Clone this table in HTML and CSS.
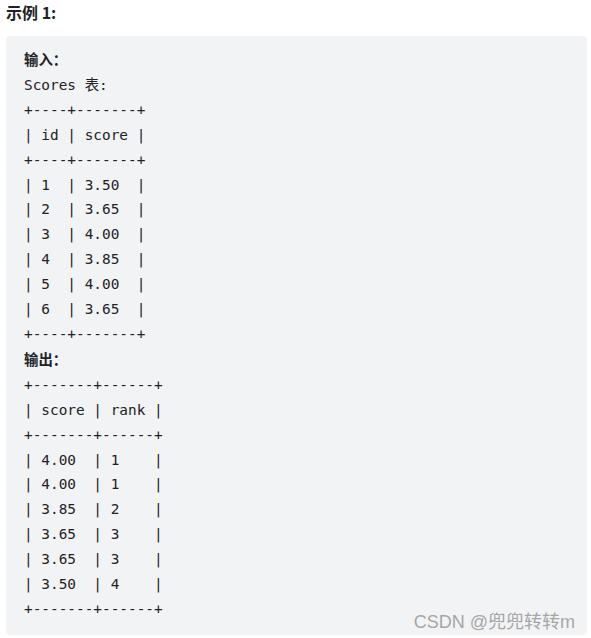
FILE: index.html
```html
<!DOCTYPE html>
<html lang="zh-CN">
<head>
<meta charset="utf-8">
<link rel="stylesheet" href="styles.css">
</head>
<body>
<p class="title">示例 1:</p>
<div class="example">
<pre class="code"><strong class="label">输入：</strong>
Scores 表:
+----+-------+
| id | score |
+----+-------+
| 1  | 3.50  |
| 2  | 3.65  |
| 3  | 4.00  |
| 4  | 3.85  |
| 5  | 4.00  |
| 6  | 3.65  |
+----+-------+
<strong class="label">输出：</strong>
+-------+------+
| score | rank |
+-------+------+
| 4.00  | 1    |
| 4.00  | 1    |
| 3.85  | 2    |
| 3.65  | 3    |
| 3.65  | 3    |
| 3.50  | 4    |
+-------+------+</pre>
<span class="watermark">CSDN @兜兜转转m</span>
</div>
</body>
</html>
```

FILE: styles.css
```css
html, body {
  margin: 0;
  padding: 0;
  background: #ffffff;
}
body {
  padding: 0 4px 0 6px;
  font-family: "Noto Sans CJK SC", "Noto Sans", sans-serif;
  color: #222226;
}
.title {
  margin: 0;
  font-size: 16px;
  line-height: 24px;
  font-weight: 700;
}
.example {
  position: relative;
  margin-top: 12px;
  background: #f2f3f5;
  border-radius: 4px;
  padding: 11px 18px 13px 18px;
}
.code {
  margin: 0;
  font-family: "DejaVu Sans Mono", "Noto Sans CJK SC", monospace;
  font-size: 14.4px;
  line-height: 24.9px;
  color: #222226;
}
.label {
  font-family: "Noto Sans CJK SC", sans-serif;
  font-weight: 700;
}
.watermark {
  position: absolute;
  right: 12px;
  bottom: 2px;
  font-family: "Liberation Sans", "Noto Sans CJK SC", sans-serif;
  font-size: 18px;
  line-height: 22px;
  color: rgba(130, 130, 130, 0.7);
}
```
